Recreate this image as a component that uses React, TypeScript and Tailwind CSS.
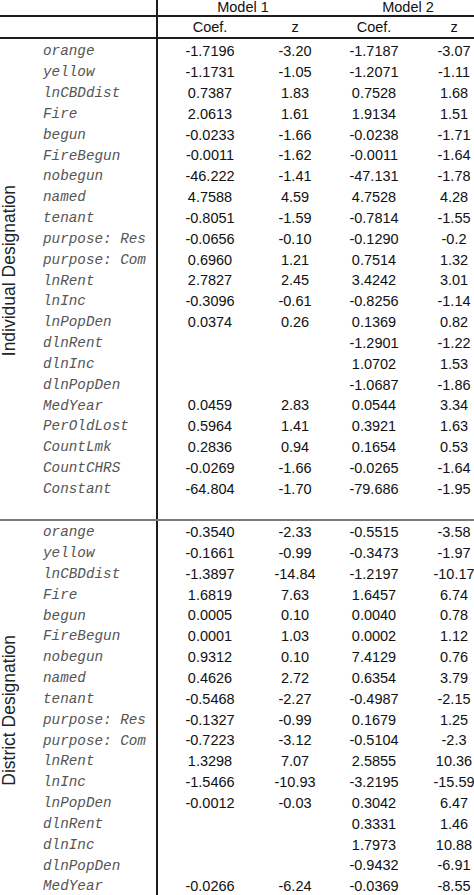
import React from "react";

type Row = [string, string, string, string, string];

const individual: Row[] = [
  ["orange", "-1.7196", "-3.20", "-1.7187", "-3.07"],
  ["yellow", "-1.1731", "-1.05", "-1.2071", "-1.11"],
  ["lnCBDdist", "0.7387", "1.83", "0.7528", "1.68"],
  ["Fire", "2.0613", "1.61", "1.9134", "1.51"],
  ["begun", "-0.0233", "-1.66", "-0.0238", "-1.71"],
  ["FireBegun", "-0.0011", "-1.62", "-0.0011", "-1.64"],
  ["nobegun", "-46.222", "-1.41", "-47.131", "-1.78"],
  ["named", "4.7588", "4.59", "4.7528", "4.28"],
  ["tenant", "-0.8051", "-1.59", "-0.7814", "-1.55"],
  ["purpose: Res", "-0.0656", "-0.10", "-0.1290", "-0.2"],
  ["purpose: Com", "0.6960", "1.21", "0.7514", "1.32"],
  ["lnRent", "2.7827", "2.45", "3.4242", "3.01"],
  ["lnInc", "-0.3096", "-0.61", "-0.8256", "-1.14"],
  ["lnPopDen", "0.0374", "0.26", "0.1369", "0.82"],
  ["dlnRent", "", "", "-1.2901", "-1.22"],
  ["dlnInc", "", "", "1.0702", "1.53"],
  ["dlnPopDen", "", "", "-1.0687", "-1.86"],
  ["MedYear", "0.0459", "2.83", "0.0544", "3.34"],
  ["PerOldLost", "0.5964", "1.41", "0.3921", "1.63"],
  ["CountLmk", "0.2836", "0.94", "0.1654", "0.53"],
  ["CountCHRS", "-0.0269", "-1.66", "-0.0265", "-1.64"],
  ["Constant", "-64.804", "-1.70", "-79.686", "-1.95"],
];

const district: Row[] = [
  ["orange", "-0.3540", "-2.33", "-0.5515", "-3.58"],
  ["yellow", "-0.1661", "-0.99", "-0.3473", "-1.97"],
  ["lnCBDdist", "-1.3897", "-14.84", "-1.2197", "-10.17"],
  ["Fire", "1.6819", "7.63", "1.6457", "6.74"],
  ["begun", "0.0005", "0.10", "0.0040", "0.78"],
  ["FireBegun", "0.0001", "1.03", "0.0002", "1.12"],
  ["nobegun", "0.9312", "0.10", "7.4129", "0.76"],
  ["named", "0.4626", "2.72", "0.6354", "3.79"],
  ["tenant", "-0.5468", "-2.27", "-0.4987", "-2.15"],
  ["purpose: Res", "-0.1327", "-0.99", "0.1679", "1.25"],
  ["purpose: Com", "-0.7223", "-3.12", "-0.5104", "-2.3"],
  ["lnRent", "1.3298", "7.07", "2.5855", "10.36"],
  ["lnInc", "-1.5466", "-10.93", "-3.2195", "-15.59"],
  ["lnPopDen", "-0.0012", "-0.03", "0.3042", "6.47"],
  ["dlnRent", "", "", "0.3331", "1.46"],
  ["dlnInc", "", "", "1.7973", "10.88"],
  ["dlnPopDen", "", "", "-0.9432", "-6.91"],
  ["MedYear", "-0.0266", "-6.24", "-0.0369", "-8.55"],
];

function Spacer({ h }: { h: string }) {
  return (
    <div className="grid grid-cols-[158px_330px]">
      <div className={`${h} border-r-2 border-[#1c1c1c]`} />
      <div />
    </div>
  );
}

function Section({ title, span, rows }: { title: string; span: string; rows: Row[] }) {
  return (
    <div className="grid grid-cols-[40px_118px_104px_66px_92px_68px]">
      <div className={`${span} flex items-center justify-start pl-[1px]`}>
        <span className="[writing-mode:vertical-rl] rotate-180 text-[17.5px] leading-none text-[#222] whitespace-nowrap">
          {title}
        </span>
      </div>
      {rows.map((r, i) => (
        <React.Fragment key={i}>
          <div className="h-[20.85px] flex items-center pl-[3px] border-r-2 border-[#1c1c1c] font-['Liberation_Mono',monospace] italic text-[14.3px] text-[#555] whitespace-pre">
            {r[0]}
          </div>
          {r.slice(1).map((v, j) => (
            <div key={j} className="h-[20.85px] flex items-center justify-center">
              {v}
            </div>
          ))}
        </React.Fragment>
      ))}
    </div>
  );
}

export default function App() {
  return (
    <div className="w-[474px] h-[895px] overflow-hidden bg-white font-['Liberation_Sans',Arial,sans-serif] text-[14.5px] text-[#111]">
      <div className="w-[488px]">
        <div className="grid grid-cols-[158px_170px_160px] h-[17px] border-b-2 border-[#1c1c1c]">
          <div className="border-r-2 border-[#1c1c1c]" />
          <div className="flex items-center justify-center leading-none pb-[1px]">Model 1</div>
          <div className="flex items-center justify-center leading-none pb-[1px]">Model 2</div>
        </div>
        <div className="grid grid-cols-[158px_104px_66px_92px_68px] h-[22px] border-b-2 border-[#1c1c1c]">
          <div className="border-r-2 border-[#1c1c1c]" />
          <div className="flex items-center justify-center">Coef.</div>
          <div className="flex items-center justify-center">z</div>
          <div className="flex items-center justify-center">Coef.</div>
          <div className="flex items-center justify-center">z</div>
        </div>
        <Spacer h="h-[2.6px]" />
        <Section title="Individual Designation" span="row-[span_22/span_22]" rows={individual} />
        <Spacer h="h-[18.7px]" />
        <div className="h-[2px] bg-[#7a7a7a]" />
        <Spacer h="h-[1.6px]" />
        <Section title="District Designation" span="row-[span_18/span_18]" rows={district} />
      </div>
    </div>
  );
}
